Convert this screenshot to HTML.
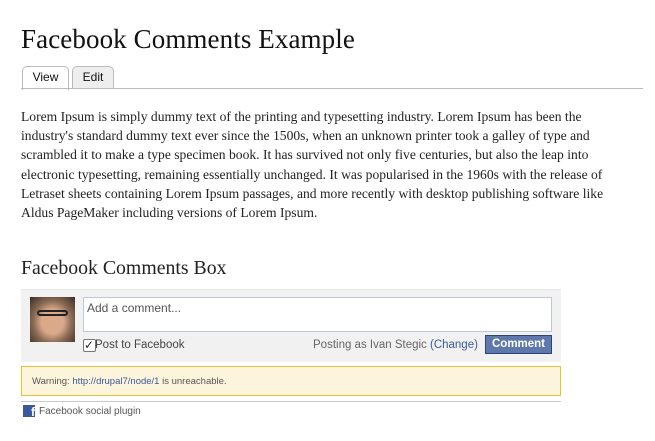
<!DOCTYPE html>
<html><head><meta charset="utf-8"><style>
body{margin:0;background:#fff;width:655px;height:441px;overflow:hidden;position:relative;font-family:"Liberation Serif",serif;color:#222}
.a{position:absolute}
h1{position:absolute;left:21px;top:24px;margin:0;font-weight:normal;font-size:27px;color:#111;letter-spacing:0.1px}
.tab{position:absolute;top:66px;height:22px;border:1px solid #bbb;border-bottom:none;border-radius:5px 5px 0 0;font:12px "Liberation Sans",sans-serif;line-height:21px;text-align:center;color:#111}
.p{left:21px;top:107px;font-size:13.6px;line-height:19.2px;color:#222;white-space:nowrap}
.s{font-family:"Liberation Sans",sans-serif}
</style></head><body>
<h1>Facebook Comments Example</h1>
<div class="tab" style="left:22px;width:45px;background:#fff;height:23px">View</div>
<div class="tab" style="left:72px;width:40px;background:#eee">Edit</div>
<div class="a" style="left:21px;top:88px;width:622px;height:1px;background:#bbb"></div>
<div class="a p">Lorem Ipsum is simply dummy text of the printing and typesetting industry. Lorem Ipsum has been the<br>industry's standard dummy text ever since the 1500s, when an unknown printer took a galley of type and<br>scrambled it to make a type specimen book. It has survived not only five centuries, but also the leap into<br>electronic typesetting, remaining essentially unchanged. It was popularised in the 1960s with the release of<br>Letraset sheets containing Lorem Ipsum passages, and more recently with desktop publishing software like<br>Aldus PageMaker including versions of Lorem Ipsum.</div>
<div class="a" style="left:21px;top:257px;font-size:19.8px;color:#222">Facebook Comments Box</div>
<div class="a" style="left:21px;top:289px;width:540px;height:72px;background:#f1f1f1;border-top:1px solid #e8e8e8"></div>
<div class="a" style="left:30px;top:297px;width:45px;height:45px;background:radial-gradient(ellipse at 50% 55%,#d9a98a 0 35%,#8a6a55 60%,#3a2c24 100%)"></div>
<div class="a" style="left:37px;top:310px;width:31px;height:6px;border:2px solid #222;border-radius:3px;box-sizing:border-box"></div>
<div class="a" style="left:83px;top:297px;width:467px;height:33px;background:#fff;border:1px solid #bdc7d8"></div>
<div class="a s" style="left:87px;top:301px;font-size:12px;color:#555">Add a comment...</div>
<div class="a" style="left:83px;top:339px;width:11px;height:11px;border:1px solid #777;background:#fff;border-radius:2px;font:12px sans-serif;line-height:10px;color:#222">✓</div>
<div class="a s" style="left:95px;top:339px;font-size:11.5px;color:#444">Post to Facebook</div>
<div class="a s" style="left:313px;top:339px;font-size:11.5px;color:#666">Posting as Ivan Stegic <span style="color:#3b5998">(Change)</span></div>
<div class="a s" style="left:485px;top:335px;width:65px;height:17px;background:#5f78ab;border:1px solid #29447e;color:#fff;font-size:11.5px;font-weight:bold;text-align:center;line-height:17px">Comment</div>
<div class="a s" style="left:21px;top:366px;width:538px;height:28px;background:#fcf5dc;border:1px solid #e2c23a;font-size:9.5px;line-height:29px;color:#555;text-indent:10px">Warning: <span style="color:#3b5998">http://drupal7/node/1</span> is unreachable.</div>
<div class="a" style="left:21px;top:401px;width:540px;height:1px;background:#ccc"></div>
<div class="a s" style="left:23px;top:405px;width:12px;height:12px;background:#3b5998;color:#fff;font-weight:bold;font-size:12px;line-height:14px;text-align:right;overflow:hidden">f</div>
<div class="a s" style="left:39px;top:406px;font-size:10px;color:#555">Facebook social plugin</div>
</body></html>
